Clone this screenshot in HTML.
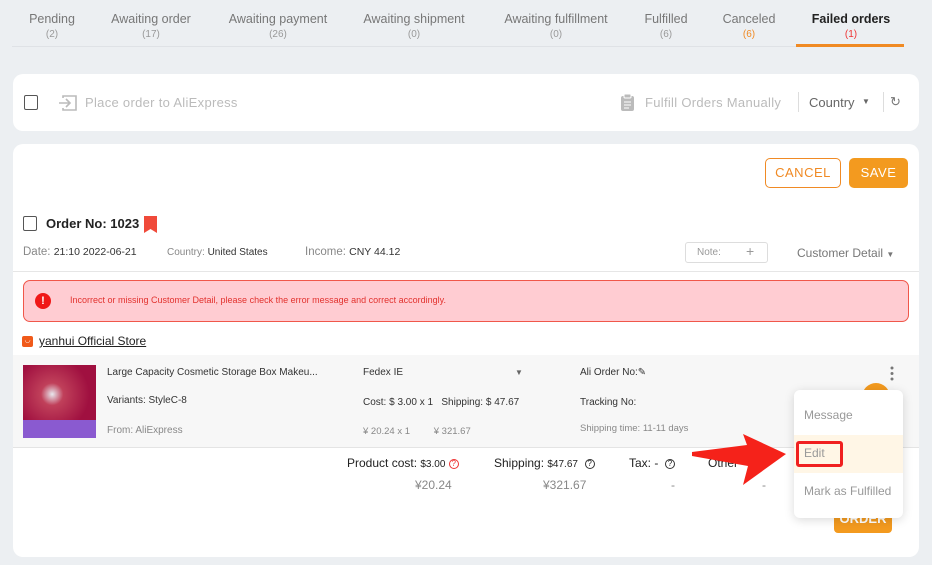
<!DOCTYPE html>
<html><head><meta charset="utf-8"><style>
*{box-sizing:border-box;margin:0;padding:0}
body{width:932px;height:565px;background:#eceff2;font-family:"Liberation Sans",sans-serif;position:relative;overflow:hidden;color:#333}
.a{position:absolute;white-space:nowrap}
.tab{position:absolute;top:12px;text-align:center;font-size:12.5px;color:#777;line-height:15px}
.tab small{display:block;font-size:10px;color:#999}
.card{position:absolute;background:#fff;border-radius:10px}
.cb{position:absolute;width:14px;height:15px;border:1.3px solid #555;border-radius:2px;background:#fff}
.btn{position:absolute;border-radius:5px;font-size:13px;text-align:center;line-height:28px;letter-spacing:.5px}
.s{font-size:10.5px;color:#333}
.g{color:#888}
.q{display:inline-block;width:10px;height:10px;border:1px solid #333;border-radius:50%;font-size:8px;line-height:8px;text-align:center;vertical-align:1px}
</style></head><body>
<div class="tab" style="left:28px;width:48px">Pending<small>(2)</small></div>
<div class="tab" style="left:108px;width:86px">Awaiting order<small>(17)</small></div>
<div class="tab" style="left:226px;width:104px">Awaiting payment<small>(26)</small></div>
<div class="tab" style="left:360px;width:108px">Awaiting shipment<small>(0)</small></div>
<div class="tab" style="left:500px;width:112px">Awaiting fulfillment<small>(0)</small></div>
<div class="tab" style="left:640px;width:52px">Fulfilled<small>(6)</small></div>
<div class="tab" style="left:720px;width:58px">Canceled<small style="color:#f08a24">(6)</small></div>
<div class="tab" style="left:806px;width:90px;color:#222;font-weight:bold">Failed orders<small style="color:#e33;font-weight:normal">(1)</small></div>
<div class="a" style="left:12px;top:46px;width:892px;height:1px;background:#dfe2e6"></div>
<div class="a" style="left:796px;top:44px;width:108px;height:3px;background:#f08a24"></div>

<div class="card" style="left:13px;top:74px;width:906px;height:57px"></div>
<div class="cb" style="left:24px;top:95px"></div>
<svg class="a" style="left:58px;top:94px" width="20" height="18" viewBox="0 0 20 18"><path d="M5 4V2h13v14H5v-2M1 9h10M8 5l4 4-4 4" fill="none" stroke="#bbb" stroke-width="1.6"/></svg>
<div class="a" style="left:85px;top:95px;font-size:13px;color:#bbb;letter-spacing:.3px">Place order to AliExpress</div>
<svg class="a" style="left:620px;top:93px" width="15" height="19" viewBox="0 0 15 19"><rect x="1" y="3" width="13" height="15" rx="2" fill="#bbb"/><rect x="4" y="1" width="7" height="4" rx="1" fill="#bbb" stroke="#fff"/><path d="M4 9h7M4 12h7M4 15h5" stroke="#fff"/></svg>
<div class="a" style="left:645px;top:95px;font-size:13px;color:#bbb;letter-spacing:.3px">Fulfill Orders Manually</div>
<div class="a" style="left:798px;top:92px;width:1px;height:20px;background:#ddd"></div>
<div class="a" style="left:809px;top:95px;font-size:13px;color:#666">Country</div>
<div class="a" style="left:862px;top:97px;font-size:8px;color:#666">▼</div>
<div class="a" style="left:883px;top:92px;width:1px;height:20px;background:#ddd"></div>
<div class="a" style="left:890px;top:94px;font-size:13px;color:#777">↻</div>

<div class="card" style="left:13px;top:144px;width:906px;height:413px"></div>
<div class="btn" style="left:765px;top:158px;width:76px;height:30px;border:1px solid #f08a24;color:#f08a24">CANCEL</div>
<div class="btn" style="left:849px;top:158px;width:59px;height:30px;background:#f39a1f;color:#fff;line-height:30px">SAVE</div>
<div class="cb" style="left:23px;top:216px"></div>
<div class="a" style="left:46px;top:216px;font-size:13px;font-weight:bold;color:#222">Order No: 1023</div>
<svg class="a" style="left:144px;top:216px" width="13" height="17"><path d="M0 0h13v17l-6.5-4L0 17z" fill="#f04a3a"/></svg>
<div class="a g" style="left:23px;top:246px;font-size:11.5px">Date: <span style="color:#333;font-size:10.5px">21:10 2022-06-21</span></div>
<div class="a g" style="left:167px;top:247px;font-size:10px">Country: <span style="color:#333">United States</span></div>
<div class="a g" style="left:305px;top:246px;font-size:11.5px">Income: <span style="color:#333;font-size:10.5px">CNY 44.12</span></div>
<div class="a" style="left:685px;top:242px;width:83px;height:21px;border:1px solid #ddd;border-radius:3px"></div>
<div class="a" style="left:697px;top:247px;font-size:10px;color:#999">Note:</div>
<div class="a" style="left:746px;top:243px;font-size:14px;color:#999">+</div>
<div class="a" style="left:797px;top:246px;font-size:12px;color:#777">Customer Detail <span style="font-size:8px">▼</span></div>
<div class="a" style="left:13px;top:271px;width:906px;height:1px;background:#e6e6e6"></div>
<div class="a" style="left:23px;top:280px;width:886px;height:42px;background:#ffccd2;border:1px solid #f0574a;border-radius:7px"></div>
<div class="a" style="left:35px;top:293px;width:16px;height:16px;border-radius:50%;background:#f01818;color:#fff;font-size:11px;font-weight:bold;text-align:center;line-height:16px">!</div>
<div class="a" style="left:70px;top:295px;font-size:9px;color:#e2322e">Incorrect or missing Customer Detail, please check the error message and correct accordingly.</div>
<div class="a" style="left:22px;top:336px;width:11px;height:11px;background:#f05a1a;border-radius:2px;color:#fff;font-size:7px;text-align:center;line-height:10px">◡</div>
<div class="a" style="left:39px;top:334px;font-size:12px;color:#222;text-decoration:underline">yanhui Official Store</div>
<div class="a" style="left:13px;top:355px;width:906px;height:93px;background:#f7f7f7;border-bottom:1px solid #e4e4e4"></div>
<div class="a" style="left:23px;top:365px;width:73px;height:73px;background:radial-gradient(circle at 40% 40%,#e8e8ee 0,#c0405a 18%,#a01040 60%);overflow:hidden"><div style="position:absolute;left:0;bottom:0;width:73px;height:18px;background:#8a5ad0"></div></div>
<div class="a s" style="left:107px;top:367px;font-size:10px">Large Capacity Cosmetic Storage Box Makeu...</div>
<div class="a s" style="left:107px;top:395px;font-size:10px">Variants: StyleC-8</div>
<div class="a g" style="left:107px;top:425px;font-size:10px">From: AliExpress</div>
<div class="a s" style="left:363px;top:367px;font-size:10px">Fedex IE</div>
<div class="a" style="left:515px;top:368px;font-size:8px;color:#666">▼</div>
<div class="a s" style="left:363px;top:397px;font-size:10px">Cost: $ 3.00 x 1 &nbsp;&nbsp;Shipping: $ 47.67</div>
<div class="a g" style="left:363px;top:426px;font-size:9.5px">¥ 20.24 x 1 &nbsp;&nbsp;&nbsp;&nbsp;&nbsp;&nbsp;&nbsp;&nbsp;¥ 321.67</div>
<div class="a s" style="left:580px;top:367px;font-size:10px">Ali Order No:✎</div>
<div class="a s" style="left:580px;top:397px;font-size:10px">Tracking No:</div>
<div class="a g" style="left:580px;top:423px;font-size:9.5px">Shipping time: 11-11 days</div>
<svg class="a" style="left:889px;top:366px" width="6" height="16"><circle cx="3" cy="2" r="1.5" fill="#777"/><circle cx="3" cy="7.5" r="1.5" fill="#777"/><circle cx="3" cy="13" r="1.5" fill="#777"/></svg>
<div class="a" style="left:862px;top:383px;width:28px;height:28px;border-radius:50%;background:#f39a1f"></div>
<div class="a" style="left:347px;top:456px;font-size:12px;color:#222">Product cost: <span style="font-size:10px">$3.00</span> <span class="q" style="border-color:#e33;color:#e33">?</span></div>
<div class="a" style="left:494px;top:456px;font-size:12px;color:#222">Shipping: <span style="font-size:10px">$47.67</span> &nbsp;<span class="q">?</span></div>
<div class="a" style="left:629px;top:456px;font-size:12px;color:#222">Tax: - &nbsp;<span class="q">?</span></div>
<div class="a" style="left:708px;top:456px;font-size:12px;color:#222">Other</div>
<div class="a" style="left:415px;top:478px;font-size:12px;color:#888">¥20.24</div>
<div class="a" style="left:543px;top:478px;font-size:12px;color:#888">¥321.67</div>
<div class="a" style="left:671px;top:478px;font-size:12px;color:#888">-</div>
<div class="a" style="left:762px;top:478px;font-size:12px;color:#888">-</div>
<div class="a" style="left:834px;top:505px;width:58px;height:28px;background:#f39a1f;border-radius:4px;color:#fff;font-weight:bold;font-size:13px;text-align:center;line-height:28px">ORDER</div>
<div class="a" style="left:794px;top:390px;width:109px;height:128px;background:#fff;border-radius:6px;box-shadow:0 2px 10px rgba(0,0,0,.15)"></div>
<div class="a" style="left:804px;top:408px;font-size:12px;color:#999">Message</div>
<div class="a" style="left:794px;top:435px;width:109px;height:38px;background:#fff6e6"></div>
<div class="a" style="left:796px;top:441px;width:47px;height:26px;border:3px solid #f02020;border-radius:3px"></div>
<div class="a" style="left:804px;top:446px;font-size:12px;color:#999">Edit</div>
<div class="a" style="left:804px;top:484px;font-size:12px;color:#999">Mark as Fulfilled</div>
<svg class="a" style="left:0;top:0" width="932" height="565"><polygon points="692,452 747,445 743,434 786,454 743,485 748,466 692,456" fill="#f5221a"/></svg>
</body></html>
